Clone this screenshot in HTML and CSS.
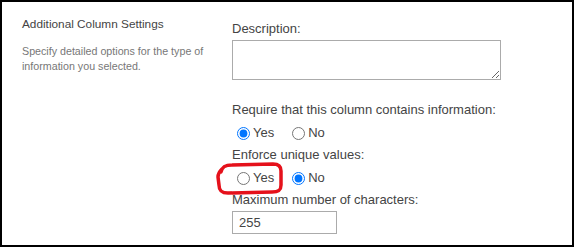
FILE: index.html
```html
<!DOCTYPE html>
<html lang="en">
<head>
    <meta charset="UTF-8">
    <title>Additional Column Settings</title>
    <link rel="stylesheet" href="styles.css">
</head>
<body>
    <div class="page">
        <div class="section">
            <div class="section-info">
                <h3 class="section-title">Additional Column Settings</h3>
                <p class="section-desc">Specify detailed options for the type of information you selected.</p>
            </div>
            <div class="section-body">
                <div class="field-label">Description:</div>
                <textarea class="desc-box"></textarea>

                <div class="field-label spaced">Require that this column contains information:</div>
                <div class="radio-row">
                    <label><input type="radio" name="required" checked>Yes</label>
                    <label><input type="radio" name="required">No</label>
                </div>

                <div class="field-label">Enforce unique values:</div>
                <div class="radio-row">
                    <label><input type="radio" name="unique">Yes</label>
                    <label><input type="radio" name="unique" checked>No</label>
                </div>

                <div class="field-label">Maximum number of characters:</div>
                <input class="max-chars" type="text" value="255">
            </div>
        </div>
    </div>

    <svg class="markup" width="574" height="247" viewBox="0 0 574 247">
        <path d="M221 172 C222 167 225 165 232 165 L273 164 C279 164 281 167 281 171 L281 185 C281 190 279 192 272 192 L228 193 C222 193 219 191 219 185 L218 177 C218 174 219 172 222 169"
              fill="none" stroke="#e5111b" stroke-width="3.5" stroke-linecap="round" stroke-linejoin="round"/>
    </svg>
</body>
</html>
```

FILE: styles.css
```css
body {
    margin: 0;
    padding: 2px;
    background-color: #000;
    font-family: 'Liberation Sans', Arial, sans-serif;
    position: relative;
}

.page {
    background-color: #fff;
    width: 570px;
    height: 243px;
    box-sizing: border-box;
    padding: 14px 20px 0 20px;
}

.section {
    display: grid;
    grid-template-columns: 210px 1fr;
}

.section-title {
    margin: 0;
    font-size: 11.8px;
    font-weight: normal;
    line-height: 16px;
    color: #444;
}

.section-desc {
    margin: 12px 0 0 0;
    font-size: 10.7px;
    line-height: 15px;
    color: #777;
    width: 190px;
}

.section-body {
    padding-top: 4px;
    color: #444;
    font-size: 13px;
}

.field-label {
    line-height: 18px;
}

.field-label.spaced {
    margin-top: 21px;
}

.desc-box {
    display: block;
    width: 269px;
    height: 40px;
    box-sizing: border-box;
    margin: 2px 0 0 0;
    border: 1px solid #ababab;
    border-radius: 0;
    padding: 2px;
    font-family: inherit;
}

.radio-row {
    display: flex;
    gap: 18px;
    padding: 5px 0 4px 5px;
    line-height: 18px;
}

.radio-row label {
    display: flex;
    align-items: center;
    gap: 3px;
}

.radio-row input {
    margin: 0;
    width: 13px;
    height: 13px;
}

.max-chars {
    display: block;
    margin-top: 2px;
    width: 105px;
    height: 23px;
    box-sizing: border-box;
    border: 1px solid #ababab;
    border-radius: 0;
    padding: 0 6px;
    font-family: inherit;
    font-size: 13px;
    color: #444;
}

.markup {
    position: absolute;
    top: 0;
    left: 0;
    pointer-events: none;
}
```
